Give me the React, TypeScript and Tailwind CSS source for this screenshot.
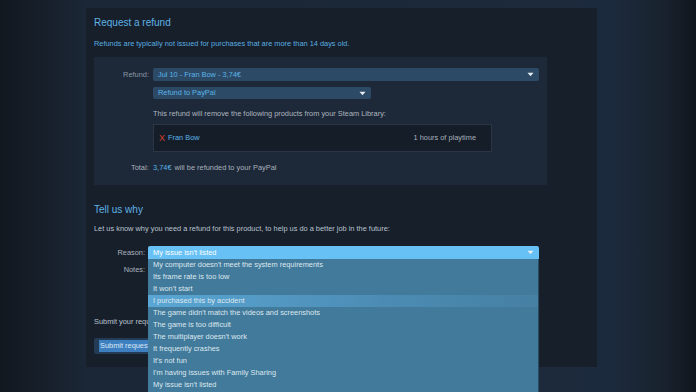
const reasons = [
  "My computer doesn't meet the system requirements",
  "Its frame rate is too low",
  "It won't start",
  "I purchased this by accident",
  "The game didn't match the videos and screenshots",
  "The game is too difficult",
  "The multiplayer doesn't work",
  "It frequently crashes",
  "It's not fun",
  "I'm having issues with Family Sharing",
  "My issue isn't listed",
];

const Arrow = () => (
  <svg width="7" height="5" viewBox="0 0 7 5" className="shrink-0">
    <path d="M0.5 0.8h6L3.5 4.2z" fill="#e6eef4" />
  </svg>
);

export default function App() {
  return (
    <div
      className="relative w-[696px] h-[392px] overflow-hidden bg-[linear-gradient(to_right,#121820_0%,#18212d_8%,#1b2636_12%,#1b2838_50%,#1c2a3d_88%,#19232f_95%,#11161d_100%)] pt-[8px]"
      style={{ fontFamily: '"Liberation Sans", Arial, sans-serif' }}
    >
      <div className="relative ml-[86px] w-[511px] h-[359px] bg-[#171f2b] pl-[8px] pt-[9px]">
        {/* Request a refund */}
        <h2 className="text-[10px] leading-[12px] text-[#5fb2e4]">Request a refund</h2>
        <p className="mt-[11px] text-[7.4px] leading-[8px] text-[#5aaee0]">
          Refunds are typically not issued for purchases that are more than 14 days old.
        </p>

        <div className="mt-[9px] w-[453px] h-[128px] bg-[#1d2838] pt-[11px] text-[7.4px] leading-[8px]">
          <div className="flex items-center">
            <span className="w-[59px] pr-[4px] text-right text-[#8b98a6]">Refund:</span>
            <div className="flex items-center justify-between w-[386px] h-[13px] rounded-[2px] bg-[#2c4a66] px-[5px] text-[#5cb4e8]">
              <span>Jul 10 - Fran Bow - 3,74€</span>
              <Arrow />
            </div>
          </div>
          <div className="flex items-center mt-[6px]">
            <span className="w-[59px]" />
            <div className="flex items-center justify-between w-[218px] h-[12px] rounded-[2px] bg-[#2c4a66] px-[5px] text-[#5cb4e8]">
              <span>Refund to PayPal</span>
              <Arrow />
            </div>
          </div>
          <div className="ml-[59px] mt-[11px] text-[#aeb6bf]">
            This refund will remove the following products from your Steam Library:
          </div>
          <div className="ml-[59px] mt-[6px] flex items-center justify-between w-[339px] h-[28px] border border-[#2a3646] bg-[#151d29] px-[5px]">
            <span className="flex items-center gap-[3px]">
              <span className="text-[9px] text-[#d5402b]">X</span>
              <span className="text-[#5cb4e8]">Fran Bow</span>
            </span>
            <span className="mr-[10px] text-[#a8b0ba]">1 hours of playtime</span>
          </div>
          <div className="flex items-center mt-[12px]">
            <span className="w-[59px] pr-[4px] pl-[37px] text-[#aab2bc]">Total:</span>
            <span className="text-[#5cb4e8]">3,74€</span>
            <span className="ml-[3px] text-[#aab2bc]">will be refunded to your PayPal</span>
          </div>
        </div>

        {/* Tell us why */}
        <h2 className="mt-[19px] text-[10px] leading-[12px] text-[#5fb2e4]">Tell us why</h2>
        <p className="mt-[9px] text-[7.4px] leading-[8px] text-[#b9c3cd]">
          Let us know why you need a refund for this product, to help us do a better job in the future:
        </p>

        <div className="mt-[13px] flex items-center text-[7.4px] leading-[8px]">
          <span className="w-[54px] pr-[3px] text-right text-[#aab2bc]">Reason:</span>
          <div className="flex items-center justify-between w-[391px] h-[13px] rounded-t-[2px] bg-[#67c1f5] px-[5px] text-white">
            <span>My issue isn't listed</span>
            <Arrow />
          </div>
        </div>
        <div className="mt-[7px] flex text-[7.4px] leading-[8px]">
          <span className="w-[54px] pr-[3px] text-right text-[#aab2bc]">Notes:</span>
        </div>

        <p className="mt-[44px] text-[7.4px] leading-[8px] text-[#b9c3cd]">Submit your request</p>
        <div className="mt-[12px] flex items-center w-[80px] h-[16px] rounded-[2px] bg-[#233b54] px-[5px] text-[7.4px]">
          <span className="bg-[#3e7fc0] text-[#dbe9f5] px-[1px]">Submit request</span>
        </div>

        {/* open dropdown list */}
        <ul className="absolute left-[62px] top-[251px] w-[391px] h-[133px] bg-[#427a9b] border-r border-[#2b4d63] text-[7.4px] leading-[12px] text-[#dde8ef]">
          {reasons.map((r, i) => (
            <li
              key={i}
              className={
                i === 3
                  ? "h-[12px] px-[5px] bg-[linear-gradient(to_right,#5aa6d4,#4c8cb4_60%,#4680a3)]"
                  : "h-[12px] px-[5px]"
              }
            >
              {r}
            </li>
          ))}
        </ul>
      </div>
    </div>
  );
}
